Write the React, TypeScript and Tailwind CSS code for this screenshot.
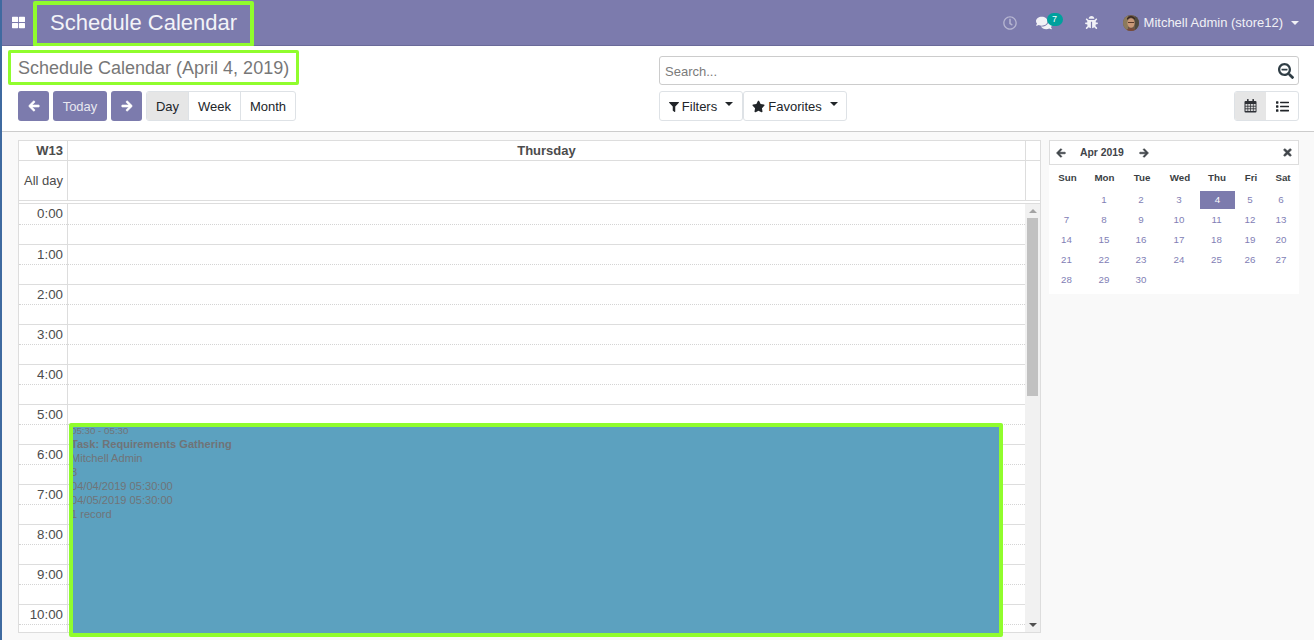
import React from "react";
import { FaArrowLeft, FaArrowRight, FaBug, FaComments, FaFilter, FaList, FaRegClock, FaSearchMinus, FaStar, FaThLarge, FaTimes } from "react-icons/fa";

const hours = Array.from({ length: 11 }, (_, i) => `${i}:00`);
const weeks = [
  ["", "1", "2", "3", "4", "5", "6"],
  ["7", "8", "9", "10", "11", "12", "13"],
  ["14", "15", "16", "17", "18", "19", "20"],
  ["21", "22", "23", "24", "25", "26", "27"],
  ["28", "29", "30", "", "", "", ""],
];
const dayNames = ["Sun", "Mon", "Tue", "Wed", "Thu", "Fri", "Sat"];

function Caret() {
  return <span className="inline-block w-0 h-0 border-x-[4px] border-x-transparent border-t-[4px] border-t-current" />;
}

function Avatar() {
  return (
    <svg width="16" height="16" viewBox="0 0 16 16" className="rounded-full">
      <rect width="16" height="16" fill="#6b5a4a" />
      <rect x="0" y="0" width="5" height="16" fill="#8c7a5c" />
      <rect x="12" y="0" width="4" height="16" fill="#4f4a3f" />
      <ellipse cx="8" cy="8" rx="3.6" ry="4.8" fill="#c89878" />
      <path d="M4 5 Q8 0 12 5 L12 3 Q8 -1 4 3Z" fill="#3a2a20" />
      <rect x="5" y="7" width="6" height="1" fill="#5a3a2a" />
      <path d="M2 16 Q8 10 14 16Z" fill="#7a4a3a" />
    </svg>
  );
}

function CalendarIcon() {
  return (
    <svg width="13" height="14" viewBox="0 0 13 14" fill="none">
      <rect x="0.5" y="2" width="12" height="11.5" rx="1" fill="#2f3136" />
      <rect x="3" y="0" width="1.6" height="3.4" rx="0.6" fill="#2f3136" />
      <rect x="8.4" y="0" width="1.6" height="3.4" rx="0.6" fill="#2f3136" />
      <g fill="#d9d9d9">
        <rect x="1.5" y="5" width="2" height="1.8" />
        <rect x="4.2" y="5" width="2" height="1.8" />
        <rect x="6.9" y="5" width="2" height="1.8" />
        <rect x="9.6" y="5" width="2" height="1.8" />
        <rect x="1.5" y="7.6" width="2" height="1.8" />
        <rect x="4.2" y="7.6" width="2" height="1.8" />
        <rect x="6.9" y="7.6" width="2" height="1.8" />
        <rect x="9.6" y="7.6" width="2" height="1.8" />
        <rect x="1.5" y="10.2" width="2" height="1.8" />
        <rect x="4.2" y="10.2" width="2" height="1.8" />
        <rect x="6.9" y="10.2" width="2" height="1.8" />
        <rect x="9.6" y="10.2" width="2" height="1.8" />
      </g>
    </svg>
  );
}

const arrowBold = { stroke: "currentColor", strokeWidth: 30 };

function dayCellClass(d: string, j: number) {
  if (d === "4") return "ml-[1px] h-[18px] leading-[18px] bg-[#7c7bad] text-white";
  if (j === 6) return "pr-[4px]";
  if (j === 1 || j === 4) return "pr-[1px]";
  return "pr-[2px]";
}

export default function App() {
  return (
    <div className="h-[640px] w-[1314px] overflow-hidden flex flex-col border-l-[2px] border-[#3f6aa0] bg-[#f9f9f9] text-[13px] text-[#212529] font-['Liberation_Sans',Arial,sans-serif]">
      <nav className="h-[46px] shrink-0 flex items-center bg-[#7c7bad] border-b border-[#6a6a99] text-white">
        <div className="w-[31px] flex justify-center pl-[1px]"><FaThLarge className="w-[13px] h-[13px]" /></div>
        <div className="w-[221px] h-[46px] self-start mt-[1px] border-[4px] border-[#90fd2d] rounded-[2px] flex items-center pl-[13px] pb-[3px] text-[22px] text-[#f3f3f8] whitespace-nowrap">Schedule Calendar</div>
        <div className="ml-auto flex items-center pr-[15px] text-[#f1f1f6]">
          <FaRegClock className="w-[14px] h-[14px] opacity-50 mr-[19px]" />
          <div className="relative w-[16px] mr-[33px]">
            <FaComments className="w-[16px] h-[16px]" />
            <span className="absolute left-[11px] -top-[2px] w-[16px] h-[13px] rounded-full bg-[#00a09d] text-white text-[9px] leading-[13px] text-center">7</span>
          </div>
          <FaBug className="w-[13px] h-[13px] mr-[25px]" />
          <Avatar />
          <span className="ml-[5px] mr-[8px] whitespace-nowrap">Mitchell Admin (store12)</span>
          <Caret />
        </div>
      </nav>

      <header className="h-[86px] shrink-0 bg-white border-b border-[#cccccc] flex justify-between pl-[6px] pr-[15px]">
        <div className="flex flex-col pt-[4px]">
          <div className="w-[291px] h-[35px] border-[3px] border-[#90fd2d] rounded-[2px] flex items-center pl-[7px] pt-[2px] text-[18px] text-[#777777] whitespace-nowrap">Schedule Calendar (April 4, 2019)</div>
          <div className="flex ml-[10px] mt-[6px] h-[30px]">
            <button className="w-[31px] rounded-[3px] bg-[#7c7bad] text-white flex items-center justify-center"><FaArrowLeft className="w-[12px] h-[12px]" style={arrowBold} /></button>
            <button className="w-[54px] ml-[4px] pt-[1px] rounded-[3px] bg-[#7c7bad] text-[#e8e8f0]">Today</button>
            <button className="w-[31px] ml-[4px] rounded-[3px] bg-[#7c7bad] text-white flex items-center justify-center"><FaArrowRight className="w-[12px] h-[12px]" style={arrowBold} /></button>
            <div className="flex ml-[4px] rounded-[3px] border border-[#dee2e6] overflow-hidden">
              <button className="w-[42px] pt-[1px] bg-[#e6e6e6] border-r border-[#dee2e6]">Day</button>
              <button className="w-[52px] pt-[1px] border-r border-[#dee2e6]">Week</button>
              <button className="w-[54px] pt-[1px]">Month</button>
            </div>
          </div>
        </div>
        <div className="w-[640px] flex flex-col pt-[10px]">
          <div className="h-[29px] border border-[#cccccc] rounded-[3px] flex items-center justify-between pl-[5px] pr-[4px]">
            <span className="text-[#7b7b7b] pt-[2px]">Search...</span>
            <FaSearchMinus className="w-[16px] h-[16px] mt-[1px] text-[#2f3d45]" />
          </div>
          <div className="flex mt-[6px] h-[30px]">
            <button className="w-[84px] pt-[1px] flex items-center justify-center gap-[3px] border border-[#dee2e6] rounded-[3px]"><FaFilter className="w-[10px] h-[10px]" /><span>Filters</span><span className="ml-[5px] -mt-[5px] flex"><Caret /></span></button>
            <button className="w-[104px] pt-[1px] flex items-center justify-center gap-[3px] border border-[#dee2e6] rounded-[3px]"><FaStar className="w-[13px] h-[13px]" /><span>Favorites</span><span className="ml-[5px] -mt-[5px] flex"><Caret /></span></button>
            <div className="ml-auto flex rounded-[3px] border border-[#dee2e6] overflow-hidden">
              <button className="w-[31px] bg-[#e6e6e6] flex items-center justify-center"><CalendarIcon /></button>
              <button className="w-[32px] flex items-center justify-center"><FaList className="w-[13px] h-[13px]" /></button>
            </div>
          </div>
        </div>
      </header>

      <main className="flex-1 min-h-0 flex items-start pl-[16px] pt-[8px]">
        <section className="relative w-[1023px] h-[493px] border border-[#dddddd] bg-white text-[#4c4c4c] flex flex-col">
          <div className="h-[20px] shrink-0 flex border-b border-[#dddddd] font-bold">
            <div className="w-[49px] border-r border-[#dddddd] text-right pr-[4px] leading-[20px]">W13</div>
            <div className="w-[958px] border-r border-[#dddddd] text-center leading-[20px]">Thursday</div>
          </div>
          <div className="h-[40px] shrink-0 flex border-b border-[#dddddd]">
            <div className="w-[49px] border-r border-[#dddddd] text-right pr-[4px] leading-[39px]">All day</div>
            <div className="w-[958px] border-r border-[#dddddd]" />
          </div>
          <div className="h-[3px] shrink-0 border-b border-[#dddddd]" />
          <div className="flex-1 min-h-0 flex">
            <div className="flex-1 min-w-0 overflow-hidden pt-[1px] [background:linear-gradient(to_right,transparent_48px,#dddddd_48px,#dddddd_49px,transparent_49px)]">
              {hours.map((h, i) => (
                <div key={h} className="flex h-[40px] border-b border-[#dddddd]">
                  <div className="w-[49px] shrink-0 border-r border-[#dddddd]">
                    <div className={i === 0 ? "h-[20px] border-b border-dotted border-[#d4d4d4] text-right pr-[4px] text-[13.3px] leading-[17px]" : "h-[20px] border-b border-dotted border-[#d4d4d4] text-right pr-[4px] text-[13.3px] leading-[19px]"}>{h}</div>
                  </div>
                  <div className="flex-1"><div className="h-[20px] border-b border-dotted border-[#d4d4d4]" /></div>
                </div>
              ))}
              <div className="flex h-[8px]">
                <div className="w-[49px] shrink-0 border-r border-[#dddddd]" />
              </div>
            </div>
            <div className="w-[15px] shrink-0 bg-[#f1f1f1] flex flex-col items-center">
              <div className="h-[14px] flex items-center justify-center"><span className="w-0 h-0 border-x-[4px] border-x-transparent border-b-[4px] border-b-[#a3a3a3]" /></div>
              <div className="w-[11px] h-[178px] bg-[#c1c1c1]" />
              <div className="mt-auto h-[14px] flex items-center justify-center"><span className="w-0 h-0 border-x-[4px] border-x-transparent border-t-[4px] border-t-[#505050]" /></div>
            </div>
          </div>
          <div className="absolute left-[50px] top-[282px] w-[934px] h-[214px] border-[4px] border-[#90fd2d] rounded-[2px] bg-[#5ca1bf] overflow-hidden text-[#707478] text-[11.1px] leading-[14px] whitespace-nowrap">
            <div className="-ml-[2px] text-[9.75px] leading-[8px] h-[10px]">05:30 - 05:30</div>
            <div className="-ml-[2px] font-bold">Task: Requirements Gathering</div>
            <div className="-ml-[2px]">Mitchell Admin</div>
            <div className="-ml-[2px]">3</div>
            <div className="-ml-[2px]">04/04/2019 05:30:00</div>
            <div className="-ml-[2px]">04/05/2019 05:30:00</div>
            <div className="-ml-[2px]">1 record</div>
          </div>
        </section>

        <aside className="ml-[8px] w-[250px] bg-white text-[#4c4c4c]">
          <div className="h-[25px] border border-[#dddddd] flex items-center pl-[6px] pr-[5px] text-[#3f4449]">
            <FaArrowLeft className="w-[10px] h-[10px]" style={arrowBold} />
            <span className="ml-[14px] text-[10.4px] font-bold">Apr 2019</span>
            <FaArrowRight className="w-[10px] h-[10px] ml-[15px]" style={arrowBold} />
            <FaTimes className="w-[11px] h-[11px] ml-auto" style={arrowBold} />
          </div>
          <div className="grid grid-cols-[37px_37px_38px_38px_36px_32px_32px] h-[25px] items-center text-[9.75px] font-bold text-[#3b3f44] text-center pt-[1px]">
            {dayNames.map((d) => <div key={d}>{d}</div>)}
          </div>
          <div className="pb-[4px]">
            {weeks.map((w, i) => (
              <div key={i} className="grid grid-cols-[37px_37px_38px_38px_36px_32px_32px] h-[20px] items-center text-[9.75px] text-[#8180b5] text-center">
                {w.map((d, j) => (
                  <div key={j} className={dayCellClass(d, j)}>{d}</div>
                ))}
              </div>
            ))}
          </div>
        </aside>
      </main>
    </div>
  );
}
